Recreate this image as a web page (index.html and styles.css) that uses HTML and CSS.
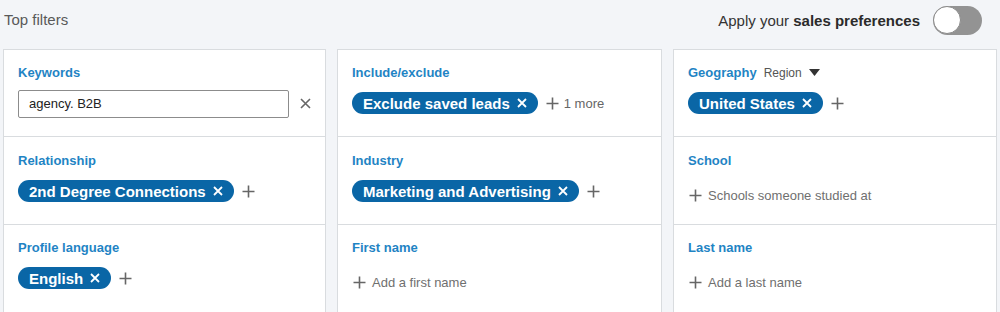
FILE: index.html
```html
<!DOCTYPE html>
<html>
<head>
<meta charset="utf-8">
<link rel="stylesheet" href="styles.css">
</head>
<body>
<div class="page">
  <div class="header">
    <div class="title">Top filters</div>
    <div class="prefs">
      <span>Apply your <b>sales preferences</b></span>
      <span class="toggle"><span class="knob"></span></span>
    </div>
  </div>
  <div class="grid">
    <div class="card">
      <div class="section">
        <div class="label">Keywords</div>
        <div class="row">
          <div class="input">agency. B2B</div>
          <svg class="clear" width="11" height="11" viewBox="0 0 11 11"><path d="M1 1L10 10M10 1L1 10" stroke="#666" stroke-width="1.6" fill="none"/></svg>
        </div>
      </div>
      <div class="section">
        <div class="label">Relationship</div>
        <div class="row">
          <span class="pill">2nd Degree Connections<svg class="px" width="10" height="10" viewBox="0 0 10 10"><path d="M1 1L9 9M9 1L1 9" stroke="#fff" stroke-width="1.8" fill="none"/></svg></span>
          <svg class="plus" width="13" height="13" viewBox="0 0 13 13"><path d="M6.5 0.5V12.5M0.5 6.5H12.5" stroke="#666" stroke-width="1.6" fill="none"/></svg>
        </div>
      </div>
      <div class="section">
        <div class="label">Profile language</div>
        <div class="row">
          <span class="pill">English<svg class="px" width="10" height="10" viewBox="0 0 10 10"><path d="M1 1L9 9M9 1L1 9" stroke="#fff" stroke-width="1.8" fill="none"/></svg></span>
          <svg class="plus" width="13" height="13" viewBox="0 0 13 13"><path d="M6.5 0.5V12.5M0.5 6.5H12.5" stroke="#666" stroke-width="1.6" fill="none"/></svg>
        </div>
      </div>
    </div>
    <div class="card">
      <div class="section">
        <div class="label">Include/exclude</div>
        <div class="row">
          <span class="pill">Exclude saved leads<svg class="px" width="10" height="10" viewBox="0 0 10 10"><path d="M1 1L9 9M9 1L1 9" stroke="#fff" stroke-width="1.8" fill="none"/></svg></span>
          <svg class="plus" width="13" height="13" viewBox="0 0 13 13"><path d="M6.5 0.5V12.5M0.5 6.5H12.5" stroke="#666" stroke-width="1.6" fill="none"/></svg>
          <span class="more">1 more</span>
        </div>
      </div>
      <div class="section">
        <div class="label">Industry</div>
        <div class="row">
          <span class="pill">Marketing and Advertising<svg class="px" width="10" height="10" viewBox="0 0 10 10"><path d="M1 1L9 9M9 1L1 9" stroke="#fff" stroke-width="1.8" fill="none"/></svg></span>
          <svg class="plus" width="13" height="13" viewBox="0 0 13 13"><path d="M6.5 0.5V12.5M0.5 6.5H12.5" stroke="#666" stroke-width="1.6" fill="none"/></svg>
        </div>
      </div>
      <div class="section">
        <div class="label">First name</div>
        <div class="row add">
          <svg class="plus-add" width="13" height="13" viewBox="0 0 13 13"><path d="M6.5 0.5V12.5M0.5 6.5H12.5" stroke="#666" stroke-width="1.6" fill="none"/></svg>
          <span class="placeholder">Add a first name</span>
        </div>
      </div>
    </div>
    <div class="card">
      <div class="section">
        <div class="label">Geography <span class="region">Region</span><svg class="caret" width="11" height="7" viewBox="0 0 11 7"><path d="M0 0H11L5.5 7Z" fill="#333"/></svg></div>
        <div class="row">
          <span class="pill">United States<svg class="px" width="10" height="10" viewBox="0 0 10 10"><path d="M1 1L9 9M9 1L1 9" stroke="#fff" stroke-width="1.8" fill="none"/></svg></span>
          <svg class="plus" width="13" height="13" viewBox="0 0 13 13"><path d="M6.5 0.5V12.5M0.5 6.5H12.5" stroke="#666" stroke-width="1.6" fill="none"/></svg>
        </div>
      </div>
      <div class="section">
        <div class="label">School</div>
        <div class="row add">
          <svg class="plus-add" width="13" height="13" viewBox="0 0 13 13"><path d="M6.5 0.5V12.5M0.5 6.5H12.5" stroke="#666" stroke-width="1.6" fill="none"/></svg>
          <span class="placeholder">Schools someone studied at</span>
        </div>
      </div>
      <div class="section">
        <div class="label">Last name</div>
        <div class="row add">
          <svg class="plus-add" width="13" height="13" viewBox="0 0 13 13"><path d="M6.5 0.5V12.5M0.5 6.5H12.5" stroke="#666" stroke-width="1.6" fill="none"/></svg>
          <span class="placeholder">Add a last name</span>
        </div>
      </div>
    </div>
  </div>
</div>
</body>
</html>
```
FILE: styles.css
```css
html, body {
  margin: 0;
  padding: 0;
  background: #f3f5f8;
  font-family: "Liberation Sans", Arial, sans-serif;
}
.page {
  padding: 0 3px;
  width: 994px;
}
.header {
  height: 49px;
  display: flex;
  justify-content: space-between;
  align-items: flex-start;
}
.title {
  font-size: 15px;
  color: #595959;
  margin-top: 11px;
  margin-left: 1px;
}
.prefs {
  display: flex;
  align-items: center;
  font-size: 15px;
  color: #333;
  margin-top: 6px;
  margin-right: 15px;
}
.prefs b {
  font-weight: bold;
  color: #2b2b2b;
}
.toggle {
  display: block;
  width: 49px;
  height: 29px;
  border-radius: 15px;
  background: #939393;
  margin-left: 13px;
  position: relative;
}
.knob {
  position: absolute;
  left: 0;
  top: 0;
  width: 26px;
  height: 26px;
  border-radius: 50%;
  background: #fff;
  border: 1.5px solid #8a8a8a;
}
.grid {
  display: grid;
  grid-template-columns: 323px 325px 324px;
  column-gap: 11px;
}
.card {
  background: #fff;
  border: 1px solid #d9dcdf;
  border-bottom: none;
}
.section {
  height: 87px;
  border-bottom: 1px solid #d9dcdf;
  padding: 15px 0 0 14px;
  box-sizing: border-box;
}
.section:nth-child(2) {
  height: 88px;
  padding-top: 16px;
}
.section:last-child {
  border-bottom: none;
}
.label {
  font-size: 13px;
  font-weight: bold;
  color: #1f84c4;
  height: 16px;
  line-height: 16px;
  display: flex;
  align-items: center;
}
.region {
  font-size: 12px;
  font-weight: normal;
  color: #555;
  margin-left: 7px;
}
.caret {
  margin-left: 7px;
  margin-bottom: 2px;
}
.row {
  display: flex;
  align-items: center;
  margin-top: 11px;
  height: 22px;
}
.row.add {
  margin-top: 15px;
}
.input {
  width: 271px;
  height: 28px;
  box-sizing: border-box;
  border: 1px solid #8c8c8c;
  border-radius: 2px;
  font-size: 13px;
  color: #222;
  padding-left: 10px;
  line-height: 26px;
  margin-top: 1px;
}
.clear {
  margin-left: 11px;
}
.pill {
  display: inline-flex;
  align-items: center;
  height: 22px;
  border-radius: 11px;
  background: #0a66a6;
  color: #fff;
  font-size: 15px;
  font-weight: bold;
  padding: 0 11px 0 11px;
}
.px {
  margin-left: 7px;
}
.plus {
  margin-left: 8px;
}
.more {
  font-size: 13px;
  color: #666;
  margin-left: 5px;
}
.plus-add {
  margin-left: 1px;
}
.placeholder {
  font-size: 13px;
  color: #6f6f6f;
  margin-left: 6px;
}
```
